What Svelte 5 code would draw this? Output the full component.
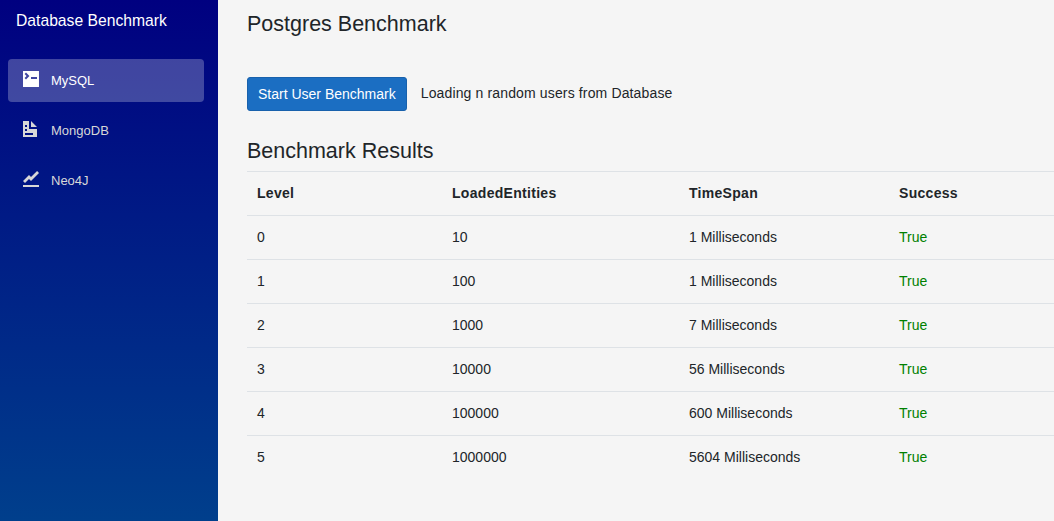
<script lang="ts">
  const links = [
    { label: 'MySQL', icon: 'terminal', active: true },
    { label: 'MongoDB', icon: 'doc', active: false },
    { label: 'Neo4J', icon: 'chart', active: false },
  ]

  const results = [
    { level: 0, loaded: 10, ms: 1 },
    { level: 1, loaded: 100, ms: 1 },
    { level: 2, loaded: 1000, ms: 7 },
    { level: 3, loaded: 10000, ms: 56 },
    { level: 4, loaded: 100000, ms: 600 },
    { level: 5, loaded: 1000000, ms: 5604 },
  ]
</script>

<div class="page">
  <aside class="sidebar">
    <div class="brand">Database Benchmark</div>
    <nav class="nav">
      {#each links as link}
        <a class="link" class:active={link.active} href="#top">
          <svg class="ico" viewBox="0 0 8 8" aria-hidden="true">
            {#if link.icon === 'terminal'}
              <path d="M.09 0c-.06 0-.09.04-.09.09v7.81c0 .05.04.09.09.09h7.81c.05 0 .09-.04.09-.09v-7.81c0-.06-.04-.09-.09-.09h-7.81zm1.41.78l1.72 1.72-1.72 1.72-.72-.72 1-1-1-1 .72-.72zm2.5 2.22h3v1h-3v-1z" />
            {:else if link.icon === 'doc'}
              <path d="M0 0v8h7v-4h-4v-4h-3zm4 0v3h3l-3-3zm-3 2h1v1h-1v-1zm0 2h1v1h-1v-1zm0 2h4v1h-4v-1z" />
            {:else}
              <path d="M7.03 0l-3.03 3-1-1-3 3.03 1 1 2-2.03 1 1 4-4-.97-1.03zm-7.03 7v1h8v-1h-8z" />
            {/if}
          </svg>
          <span>{link.label}</span>
        </a>
      {/each}
    </nav>
  </aside>

  <main class="main">
    <h1>Postgres Benchmark</h1>

    <div class="action">
      <button class="start">Start User Benchmark</button>
      <span class="hint">Loading n random users from Database</span>
    </div>

    <h2>Benchmark Results</h2>

    <table>
      <colgroup>
        <col class="c1" />
        <col class="c2" />
        <col class="c3" />
        <col />
      </colgroup>
      <thead>
        <tr>
          <th>Level</th>
          <th>LoadedEntities</th>
          <th>TimeSpan</th>
          <th>Success</th>
        </tr>
      </thead>
      <tbody>
        {#each results as row}
          <tr>
            <td>{row.level}</td>
            <td>{row.loaded}</td>
            <td>{row.ms} Milliseconds</td>
            <td class="ok">True</td>
          </tr>
        {/each}
      </tbody>
    </table>
  </main>
</div>

<style>
  :global(body) {
    margin: 0;
    background: #f5f5f5;
    font-family: "Liberation Sans", Arial, sans-serif;
    font-size: 14px;
    color: #212529;
  }

  .page {
    display: flex;
    height: 521px;
    overflow: hidden;
  }

  .sidebar {
    flex: none;
    width: 218px;
    background: linear-gradient(180deg, #000080 0%, #003f8c 100%);
  }

  .brand {
    padding: 11px 16px;
    font-size: 15.7px;
    line-height: 19px;
    color: #fff;
  }

  .nav {
    display: flex;
    flex-direction: column;
    gap: 7px;
    padding: 18px 14px 0 8px;
  }

  .link {
    display: flex;
    align-items: center;
    height: 43px;
    padding-left: 15px;
    border-radius: 4px;
    font-size: 13px;
    color: #d7d7d7;
    text-decoration: none;
  }
  .link.active {
    background: rgba(255, 255, 255, 0.25);
    color: #fff;
  }

  .ico {
    flex: none;
    width: 16px;
    height: 16px;
    margin-right: 12px;
    margin-top: -4px;
    fill: currentColor;
  }

  .main {
    flex: 1;
    min-width: 0;
    padding-left: 29px;
  }

  h1 {
    margin: 0;
    padding-top: 12px;
    font-size: 21.5px;
    line-height: 24px;
    font-weight: 400;
  }

  .action {
    display: flex;
    align-items: center;
    gap: 14px;
    margin-top: 41px;
  }

  .start {
    height: 34px;
    padding: 0 10px;
    border: 1px solid #1861ac;
    border-radius: 3px;
    background: #1b6ec2;
    color: #fff;
    font: inherit;
  }

  .hint {
    margin-top: -2px;
    letter-spacing: 0.14px;
  }

  h2 {
    margin: 28px 0 0;
    font-size: 21.5px;
    line-height: 24px;
    font-weight: 400;
  }

  table {
    width: 860px;
    margin-top: 8px;
    border-collapse: collapse;
    table-layout: fixed;
  }
  .c1 { width: 195px; }
  .c2 { width: 237px; }
  .c3 { width: 210px; }

  th,
  td {
    padding: 0 10px 2px;
    border-top: 1px solid #dee2e6;
    text-align: left;
    box-sizing: border-box;
    height: 44px;
  }
  th {
    font-weight: 700;
    letter-spacing: 0.3px;
    border-bottom: 1px solid #dee2e6;
  }
  .ok {
    color: green;
  }
</style>
